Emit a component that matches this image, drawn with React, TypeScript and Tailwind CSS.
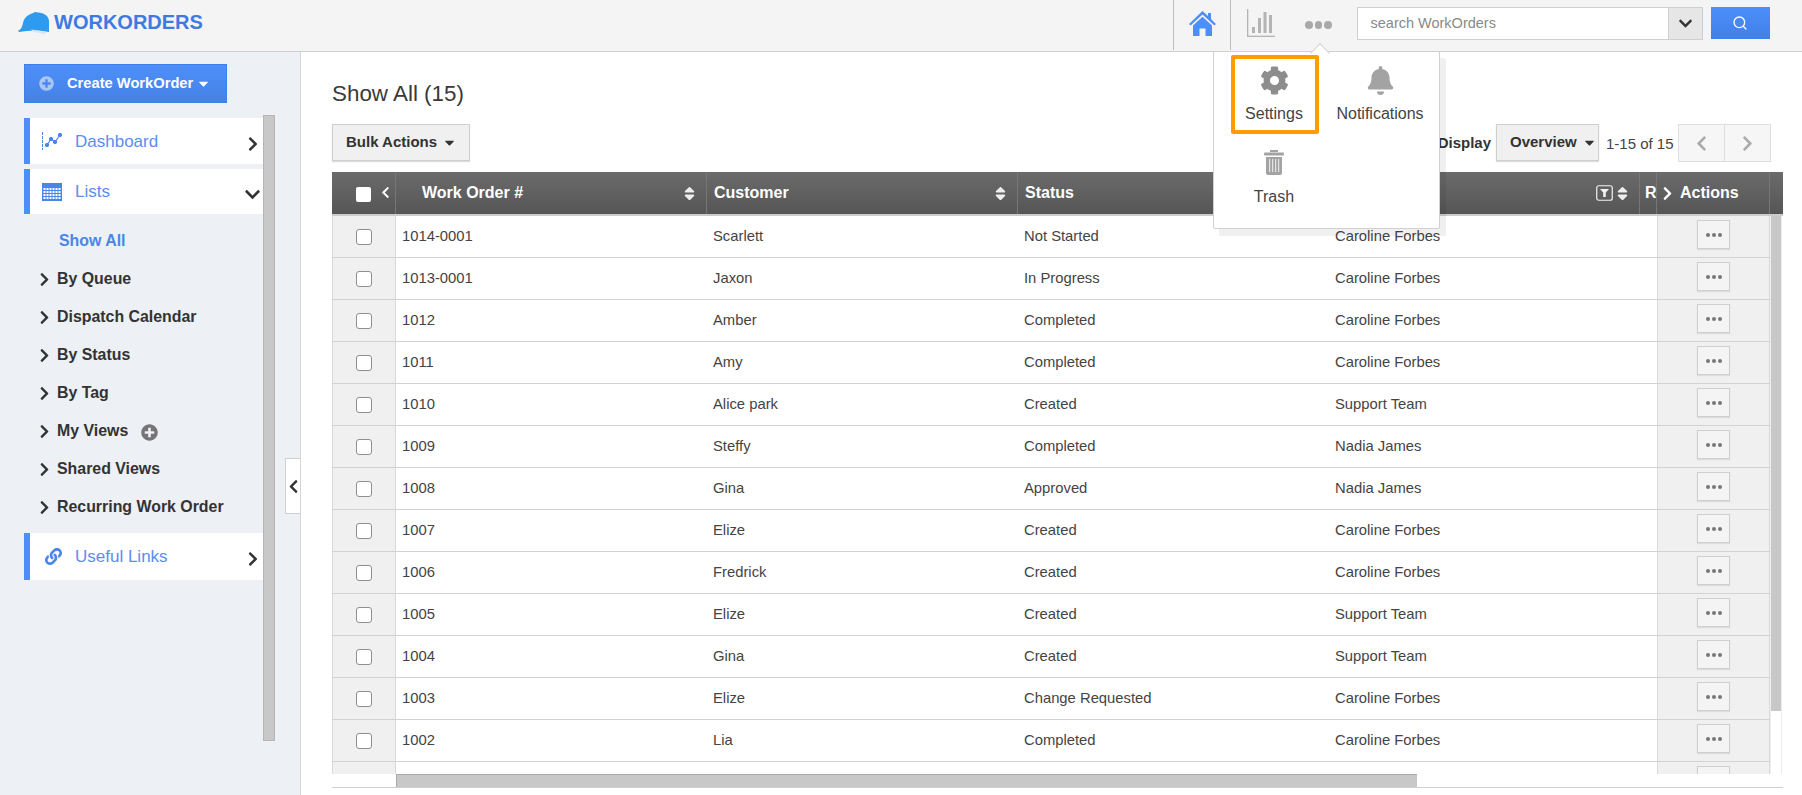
import React from "react";
import { FaChevronRight, FaChevronDown, FaChevronLeft, FaCaretDown, FaCog, FaBell, FaPlusCircle, FaLink, FaSort } from "react-icons/fa";
import { Search } from "lucide-react";

const rows = [
  ["1014-0001", "Scarlett", "Not Started", "Caroline Forbes"],
  ["1013-0001", "Jaxon", "In Progress", "Caroline Forbes"],
  ["1012", "Amber", "Completed", "Caroline Forbes"],
  ["1011", "Amy", "Completed", "Caroline Forbes"],
  ["1010", "Alice park", "Created", "Support Team"],
  ["1009", "Steffy", "Completed", "Nadia James"],
  ["1008", "Gina", "Approved", "Nadia James"],
  ["1007", "Elize", "Created", "Caroline Forbes"],
  ["1006", "Fredrick", "Created", "Caroline Forbes"],
  ["1005", "Elize", "Created", "Support Team"],
  ["1004", "Gina", "Created", "Support Team"],
  ["1003", "Elize", "Change Requested", "Caroline Forbes"],
  ["1002", "Lia", "Completed", "Caroline Forbes"],
  ["", "", "", ""],
];

const subItems = ["By Queue", "Dispatch Calendar", "By Status", "By Tag", "My Views", "Shared Views", "Recurring Work Order"];

function Hat() {
  return (
    <svg width="31" height="23" viewBox="0 0 31 23">
      <path d="M0 18.5 C3 18 4 15 5 11 C6 6 10 2.5 14 1.5 L17 0 L20 0.5 C26 1 31 4 31 9 L31 20 L24 19 C16 18.5 7 19 1 20 Z" fill="#2f9bee" />
      <path d="M13 17.5 L24 19 L29 20 L26 22.5 L22 21 L15 20 Z" fill="#d5e6f5" />
    </svg>
  );
}

function HomeIcon() {
  return (
    <svg width="27" height="26" viewBox="0 0 27 26" fill="#4d8ffa">
      <path d="M13.5 0 L19 5 V2 H22 V8 L27 13 L25.4 14.4 L13.5 3.4 L1.6 14.4 L0 13 Z" />
      <path d="M4 14.6 L13.5 5.8 L23 14.6 V25 H16.5 V17.5 H10.5 V25 H4 Z" />
    </svg>
  );
}

function DashIcon() {
  return (
    <svg width="20" height="18" viewBox="0 0 20 18" fill="none" stroke="#4a86e8">
      <path d="M0.5 0 V18" strokeWidth="1" strokeDasharray="3 1" />
      <path d="M5 13 L9 7 L13 10 L18 3" strokeWidth="1.2" />
      <circle cx="5" cy="13" r="1.7" fill="#4a86e8" />
      <circle cx="9" cy="7" r="1.7" fill="#4a86e8" />
      <circle cx="13" cy="10" r="1.7" fill="#4a86e8" />
      <circle cx="18" cy="3" r="1.7" fill="#4a86e8" />
    </svg>
  );
}

function CalIcon() {
  return (
    <svg width="20" height="18" viewBox="0 0 20 18">
      <rect x="0" y="0" width="20" height="18" fill="#4a86e8" />
      <g fill="#ffffff">
        {[5, 8, 11, 14].map((y) =>
          [2, 5, 8, 11, 14, 17].map((x) => <rect key={`${x}-${y}`} x={x - 0.5} y={y} width="2" height="2" />)
        )}
      </g>
    </svg>
  );
}

function ChartIcon() {
  return (
    <svg width="28" height="28" viewBox="0 0 28 28" fill="#b4b4b4">
      <rect x="0" y="0" width="1.3" height="28" />
      <rect x="0" y="26.7" width="28" height="1.3" />
      <rect x="5" y="18" width="3" height="6" />
      <rect x="11" y="9" width="3" height="15" />
      <rect x="16.5" y="3" width="3" height="21" />
      <rect x="22" y="6" width="3" height="18" />
    </svg>
  );
}

function TrashIcon() {
  return (
    <svg width="20" height="25" viewBox="0 0 20 25" fill="#a3a3a3">
      <rect x="6" y="0" width="8" height="2" />
      <rect x="0" y="2.5" width="20" height="3" rx="1" />
      <path d="M2 7 H18 V23 a2 2 0 0 1 -2 2 H4 a2 2 0 0 1 -2 -2 Z" />
      <g fill="#e4e4e4">
        <rect x="5" y="9" width="1.2" height="13" />
        <rect x="8" y="9" width="1.2" height="13" />
        <rect x="11" y="9" width="1.2" height="13" />
        <rect x="14" y="9" width="1.2" height="13" />
      </g>
    </svg>
  );
}

function FilterIcon() {
  return (
    <svg width="17" height="16" viewBox="0 0 17 16" fill="none">
      <rect x="0.75" y="0.75" width="15.5" height="14.5" rx="2" stroke="#f2f2f2" strokeWidth="1.2" />
      <path d="M4 4 H13 L9.8 7.5 V12 H7.2 V7.5 Z" fill="#f2f2f2" />
    </svg>
  );
}

function Dots({ cls }: { cls: string }) {
  return (
    <div className="flex items-center gap-[2px]">
      <span className={`rounded-full ${cls}`} />
      <span className={`rounded-full ${cls}`} />
      <span className={`rounded-full ${cls}`} />
    </div>
  );
}

function NavCard({ icon, label, open, cls, textCls }: { icon: React.ReactNode; label: string; open?: boolean; cls: string; textCls?: string }) {
  return (
    <div className={`flex items-center bg-white border-l-[6px] border-[#4d8ffa] ${cls}`}>
      <div className="w-[45px] pl-[12px] flex items-center justify-start">{icon}</div>
      <span className={`text-[17px] text-[#5b8def] flex-1 ${textCls ?? ""}`}>{label}</span>
      <span className="pr-[2px] text-[#333]">
        {open ? <FaChevronDown size={17} className="mt-[5px]" /> : <FaChevronRight size={16} className="mt-[5px]" />}
      </span>
    </div>
  );
}

function HeadCell({ label, w, pl, right }: { label: string; w: string; pl: string; right?: React.ReactNode }) {
  return (
    <div className={`${w} ${pl} flex items-center border-r border-[#777] h-full pr-[8px] justify-between`}>
      <span className="font-bold">{label}</span>
      {right ?? <FaSort size={17} className="text-[#eee]" />}
    </div>
  );
}

export default function App() {
  return (
    <div className="h-[795px] w-[1802px] overflow-hidden flex flex-col bg-white text-[#444] text-[15px] font-['Liberation_Sans',Arial,sans-serif]">
      {/* top bar */}
      <header className="h-[52px] shrink-0 bg-[#f4f4f4] border-b border-[#cfcfcf] flex items-start relative">
        <div className="flex items-start pl-[18px] pt-[12px] w-[1173px] shrink-0">
          <Hat />
          <span className="ml-[5px] text-[20px] leading-[21px] font-bold text-[#3e7be0]">WORKORDERS</span>
        </div>
        <div className="w-[58px] h-[50px] border-x border-[#bdbdbd] flex items-start pt-[11px] justify-center">
          <HomeIcon />
        </div>
        <div className="ml-[16px] mt-[9px]"><ChartIcon /></div>
        <div className="ml-[30px] mt-[21px]"><Dots cls="w-[7.5px] h-[7.5px] bg-[#a9a9a9]" /></div>
        <div className="ml-[25px] mt-[7px] flex h-[33px] w-[346px] border border-[#cfcfcf] bg-white">
          <div className="flex-1 pl-[13px] text-[14.5px] text-[#8a8a8a] leading-[31px]">search WorkOrders</div>
          <div className="w-[34px] bg-[#e6e6e6] border-l border-[#cfcfcf] flex items-center justify-center text-[#333]">
            <FaChevronDown size={15} />
          </div>
        </div>
        <div className="ml-[8px] mt-[7px] w-[59px] h-[32px] bg-gradient-to-b from-[#4d8ffa] to-[#3f7fe8] flex items-center justify-center text-white">
          <Search size={16} strokeWidth={2} />
        </div>
      </header>

      <div className="flex-1 flex min-h-0 relative">
        {/* sidebar */}
        <aside className="w-[301px] shrink-0 bg-[#edf0f5] border-r border-[#d6d6d6] flex items-start relative">
          <div className="w-[263px] pl-[24px] pt-[12px] shrink-0">
            <div className="w-[203px] h-[39px] bg-gradient-to-b from-[#4d8ffa] to-[#4582e6] border border-[#3f7fe8] flex items-center text-white pl-[14px]">
              <FaPlusCircle size={15} className="text-[#a9c6f5]" />
              <span className="ml-[13px] text-[14.7px] font-bold">Create WorkOrder</span>
              <FaCaretDown size={15} className="ml-[3px]" />
            </div>
            <div className="mt-[15px]">
              <NavCard icon={<DashIcon />} label="Dashboard" cls="h-[46px] w-[239px]" textCls="mt-[1px]" />
              <NavCard icon={<CalIcon />} label="Lists" open cls="h-[45px] w-[239px] mt-[5px]" />
            </div>
            <div className="pl-[35px] mt-[17px] h-[20px] text-[15.9px] font-bold text-[#4a86e8] leading-[20px]">Show All</div>
            <div className="mt-[9px]">
              {subItems.map((s) => (
                <div key={s} className="h-[38px] flex items-center pl-[13px] text-[15.9px] font-bold text-[#333]">
                  <FaChevronRight size={15} className="mr-[5px]" />
                  <span>{s}</span>
                  {s === "My Views" && <FaPlusCircle size={17} className="ml-[13px] mt-[3px] text-[#757575]" />}
                </div>
              ))}
            </div>
            <NavCard icon={<FaLink size={17} color="#4a86e8" className="ml-[3px]" />} label="Useful Links" cls="h-[47px] w-[239px] mt-[7px]" />
          </div>
          <div className="mt-[63px] w-[12px] h-[626px] bg-[#c8c8c8] border border-[#b5b5b5]" />
          <div className="absolute right-0 top-[406px] w-[15px] h-[56px] bg-white border border-r-0 border-[#d0d0d0] flex items-center justify-end text-[#333]">
            <FaChevronLeft size={15} className="-mr-[1px]" />
          </div>
        </aside>

        {/* main */}
        <main className="flex-1 min-w-0 pl-[31px] pr-[19px]">
          <h1 className="mt-[27px] h-[29px] text-[22.4px] leading-[29px] text-[#3a3a3a] font-normal">Show All (15)</h1>
          <div className="mt-[16px] h-[38px] flex items-start pr-[12px]">
            <div className="w-[138px] h-[37px] bg-[#f0f0f0] border border-[#cfcfcf] shadow-[0_1px_1px_#ddd] flex items-center pl-[13px] gap-[5px] font-bold text-[15px] text-[#333]">
              Bulk Actions <FaCaretDown size={15} />
            </div>
            <div className="ml-auto flex items-start">
              <span className="font-bold text-[15px] text-[#333] leading-[37px]">Display</span>
              <div className="ml-[5px] w-[103px] h-[37px] bg-[#f0f0f0] border border-[#cfcfcf] shadow-[0_1px_1px_#ddd] flex items-center pl-[13px] gap-[5px] font-bold text-[15px] text-[#333]">
                Overview <FaCaretDown size={15} />
              </div>
              <span className="ml-[7px] w-[72px] text-[15px] text-[#444] leading-[39px] whitespace-nowrap">1-15 of 15</span>
              <div className="w-[93px] h-[38px] bg-[#f6f6f6] border border-[#dedede] flex text-[#aaa]">
                <div className="flex-1 border-r border-[#dedede] flex items-center justify-center"><FaChevronLeft size={17} /></div>
                <div className="flex-1 flex items-center justify-center"><FaChevronRight size={17} /></div>
              </div>
            </div>
          </div>

          {/* table */}
          <div className="mt-[10px] w-[1451px]">
            <div className="h-[44px] flex bg-gradient-to-b from-[#6b6b6b] to-[#565656] border-b-[2px] border-[#cccccc] text-white text-[16px]">
              <div className="w-[64px] flex items-center border-r border-[#777] h-full pl-[24px] gap-[8px]">
                <span className="w-[15px] h-[15px] bg-white rounded-[2px] mt-[2px]" />
                <FaChevronLeft size={13} className="-mt-[2px]" />
              </div>
              <HeadCell label="Work Order #" w="w-[311px]" pl="pl-[26px]" />
              <HeadCell label="Customer" w="w-[311px]" pl="pl-[7px]" />
              <HeadCell label="Status" w="w-[311px]" pl="pl-[7px]" />
              <div className="w-[311px] flex items-center justify-end pr-[8px] gap-[1px] border-r border-[#777]">
                <FilterIcon />
                <FaSort size={17} className="text-[#eee]" />
              </div>
              <div className="w-[17px] flex items-center pl-[5px] font-bold border-r border-[#777] overflow-hidden">R</div>
              <div className="w-[113px] flex items-center pl-[3px] font-bold border-r border-[#777]">
                <FaChevronRight size={15} className="mr-[5px]" />Actions
              </div>
              <div className="flex-1" />
            </div>
            <div className="flex h-[558px] overflow-hidden">
              <div className="w-[1438px] shrink-0">
                {rows.map((r, n) => (
                  <div key={n} className="h-[42px] flex border-b border-[#d2d2d2]">
                    <div className="w-[64px] shrink-0 bg-[#f0f0f0] border-x border-[#dadada] flex items-center justify-center">
                      <span className="w-[16px] h-[16px] bg-white border border-[#8f8f8f] rounded-[3px]" />
                    </div>
                    {r.map((c, i) => (
                      <div key={i} className={`${i === 3 ? "w-[328px]" : "w-[311px]"} pl-[6px] leading-[40px] text-[14.8px] text-[#444] whitespace-nowrap`}>
                        {c}
                      </div>
                    ))}
                    <div className="w-[113px] shrink-0 bg-[#f0f0f0] border-x border-[#dadada] flex items-start justify-center pt-[4px]">
                      <div className="w-[33px] h-[29px] border border-[#cfcfcf] bg-[#f4f4f4] shadow-[0_1px_1px_#ddd] flex items-center justify-center">
                        <Dots cls="w-[4px] h-[4px] bg-[#777]" />
                      </div>
                    </div>
                  </div>
                ))}
              </div>
              <div className="w-[12px] border-x border-[#eee] h-full">
                <div className="h-[495px] bg-[#c8c8c8]" />
              </div>
            </div>
            <div className="h-[14px] border-b border-[#cfcfcf] flex">
              <div className="w-[64px]" />
              <div className="w-[1021px] h-full bg-[#c8c8c8] border-t border-l border-[#aaa]" />
            </div>
          </div>
        </main>

        {/* settings popover */}
        <div className="absolute left-[1213px] top-[-1px] w-[227px] h-[178px] bg-white border border-[#d0d0d0] rounded-[2px] shadow-[6px_7px_0_rgba(0,0,0,0.06)]">
          <div className="absolute left-[99px] top-[-6px] w-[14px] h-[14px] rotate-45 bg-white border-l border-t border-[#d0d0d0]" />
          <div className="relative pt-[3px] pl-[17px] flex flex-wrap">
            <div className="w-[88px] h-[79px] border-[4px] border-[#ff9c00] rounded-[2px] flex flex-col items-center pt-[7px] pr-[2px] text-[#8d8d8d]">
              <FaCog size={29} />
              <span className="mt-[10px] text-[16px] leading-[18px] text-[#444]">Settings</span>
            </div>
            <div className="w-[120px] h-[79px] flex flex-col items-center pt-[11px] pl-[2px] text-[#a3a3a3]">
              <FaBell size={29} />
              <span className="mt-[10px] text-[16px] leading-[18px] text-[#444]">Notifications</span>
            </div>
            <div className="w-[88px] mt-[16px] pr-[2px] flex flex-col items-center">
              <TrashIcon />
              <span className="mt-[13px] text-[16px] leading-[18px] text-[#444]">Trash</span>
            </div>
          </div>
        </div>
      </div>
    </div>
  );
}
